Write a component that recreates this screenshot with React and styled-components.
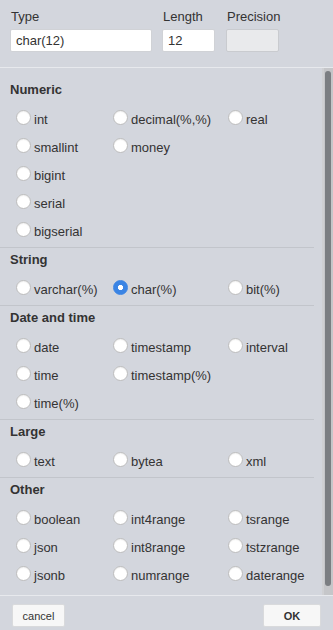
import React from "react";
import styled, { createGlobalStyle } from "styled-components";

const Global = createGlobalStyle`
  html, body {
    margin: 0;
    padding: 0;
    background: #d3d6dd;
    height: 630px;
    overflow: hidden;
  }
  body {
    font-family: "Liberation Sans", Arial, sans-serif;
    color: #333;
    font-size: 13px;
  }
  * { box-sizing: border-box; }
`;

const Dialog = styled.div`
  height: 630px;
  display: flex;
  flex-direction: column;
  background: #d3d6dd;
`;

const Header = styled.div`
  display: flex;
  gap: 10px;
  padding: 9px 0 15px 10px;
  border-bottom: 1px solid #e7e9ed;
  flex: none;
`;

const Field = styled.div`
  display: flex;
  flex-direction: column;
  gap: 5px;
  width: ${(p) => p.$w}px;
  margin-right: ${(p) => p.$mr || 0}px;
`;

const FieldLabel = styled.div`
  font-size: 13px;
  line-height: 15px;
  padding-left: 1px;
  color: #333;
`;

const TextInput = styled.input`
  height: 23px;
  width: 100%;
  border: 1px solid ${(p) => (p.disabled ? "#c9cbcf" : "#d0d2d6")};
  border-radius: 2px;
  background: ${(p) => (p.disabled ? "#e9eaec" : "#fff")};
  font-family: "Liberation Sans", Arial, sans-serif;
  font-size: 13px;
  color: #333;
  padding: 0 5px;
  margin: 0;
  outline: none;
`;

const Body = styled.div`
  flex: 1;
  min-height: 0;
  display: flex;
`;

const Viewport = styled.div`
  flex: 1;
  min-width: 0;
  overflow: hidden;
`;

const ScrollRail = styled.div`
  flex: none;
  width: 11px;
  display: flex;
  flex-direction: column;
  background: #c5c6c9;
  border-left: 2px solid #cfd0d3;
`;

const ScrollThumb = styled.div`
  flex: 1;
  margin: 3px 2px 9px 1px;
  background: #7b7e82;
  border-radius: 3px;
`;

const List = styled.div`
  padding: 10px 8px 15px 0;
`;

const Section = styled.div`
  padding: 4px 0 1px 10px;
  border-top: ${(p) => (p.$first ? "none" : "1px solid #c2c5cb")};
`;

const SectionTitle = styled.div`
  font-weight: bold;
  font-size: 13px;
  line-height: 15px;
  color: #333;
  margin-bottom: 9px;
`;

const Grid = styled.div`
  display: grid;
  grid-template-columns: 97px 115px 1fr;
  grid-auto-rows: 28px;
`;

const Option = styled.label`
  display: flex;
  align-items: flex-start;
  line-height: 28px;
  font-size: 13px;
  color: #333;
  white-space: nowrap;
`;

const Radio = styled.input.attrs({ type: "radio" })`
  appearance: none;
  -webkit-appearance: none;
  flex: none;
  width: 15px;
  height: 15px;
  margin: 3.5px 3px 0 6px;
  border-radius: 50%;
  border: 1px solid #bcbcbc;
  background: #fff;
  box-shadow: inset 0 1px 1px rgba(0, 0, 0, 0.06);
  &:checked {
    border-color: #3a84e4;
    background: radial-gradient(circle, #fff 0 2.3px, #3a84e4 2.9px);
    box-shadow: none;
  }
`;

const Footer = styled.div`
  flex: none;
  height: 35px;
  border-top: 1px solid #e7e9ed;
  display: flex;
  justify-content: space-between;
  align-items: flex-start;
  padding: 8px 12px 0 12px;
`;

const Button = styled.button`
  height: 23px;
  width: ${(p) => p.$w}px;
  background: #f7f7f7;
  border: 1px solid #d9dadc;
  border-radius: 2px;
  font-family: "Liberation Sans", Arial, sans-serif;
  font-size: 11px;
  font-weight: ${(p) => (p.$primary ? "bold" : "normal")};
  color: #333;
  padding: 0;
  margin: 0;
`;

const sections = [
  {
    title: "Numeric",
    items: [
      "int", "decimal(%,%)", "real",
      "smallint", "money", null,
      "bigint", null, null,
      "serial", null, null,
      "bigserial", null, null,
    ],
  },
  { title: "String", items: ["varchar(%)", "char(%)", "bit(%)"] },
  {
    title: "Date and time",
    items: ["date", "timestamp", "interval", "time", "timestamp(%)", null, "time(%)", null, null],
  },
  { title: "Large", items: ["text", "bytea", "xml"] },
  {
    title: "Other",
    items: [
      "boolean", "int4range", "tsrange",
      "json", "int8range", "tstzrange",
      "jsonb", "numrange", "daterange",
    ],
  },
];

export default function App() {
  const [type, setType] = React.useState("char(%)");
  return (
    <>
      <Global />
      <Dialog>
        <Header>
          <Field $w={142}>
            <FieldLabel>Type</FieldLabel>
            <TextInput defaultValue="char(12)" />
          </Field>
          <Field $w={53} $mr={1}>
            <FieldLabel>Length</FieldLabel>
            <TextInput defaultValue="12" />
          </Field>
          <Field $w={53}>
            <FieldLabel>Precision</FieldLabel>
            <TextInput disabled defaultValue="" />
          </Field>
        </Header>
        <Body>
          <Viewport>
            <List>
              {sections.map((s, si) => (
                <Section key={s.title} $first={si === 0}>
                  <SectionTitle>{s.title}</SectionTitle>
                  <Grid>
                    {s.items.map((it, i) =>
                      it ? (
                        <Option key={i}>
                          <Radio
                            name="type"
                            checked={type === it}
                            onChange={() => setType(it)}
                          />
                          {it}
                        </Option>
                      ) : (
                        <span key={i} />
                      )
                    )}
                  </Grid>
                </Section>
              ))}
            </List>
          </Viewport>
          <ScrollRail>
            <ScrollThumb />
          </ScrollRail>
        </Body>
        <Footer>
          <Button $w={53}>cancel</Button>
          <Button $w={58} $primary>
            OK
          </Button>
        </Footer>
      </Dialog>
    </>
  );
}
